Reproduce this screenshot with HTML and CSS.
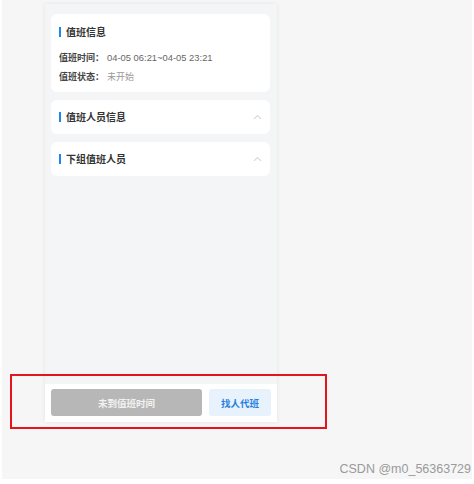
FILE: index.html
```html
<!DOCTYPE html>
<html lang="zh-CN">
<head>
<meta charset="utf-8">
<link rel="stylesheet" href="styles.css">
</head>
<body>
<div class="page">
  <div class="phone">
    <div class="content">
      <section class="card info">
        <div class="card-title"><span class="bar"></span>值班信息</div>
        <div class="row"><span class="label">值班时间：</span><span class="value">04-05 06:21~04-05 23:21</span></div>
        <div class="row"><span class="label">值班状态：</span><span class="value muted">未开始</span></div>
      </section>
      <section class="card fold">
        <div class="card-title"><span class="bar"></span>值班人员信息</div>
        <svg class="chev" viewBox="0 0 10 6" width="9" height="6"><path d="M1 5 L5 1.5 L9 5" fill="none" stroke="#d2d4d8" stroke-width="1.2"/></svg>
      </section>
      <section class="card fold">
        <div class="card-title"><span class="bar"></span>下组值班人员</div>
        <svg class="chev" viewBox="0 0 10 6" width="9" height="6"><path d="M1 5 L5 1.5 L9 5" fill="none" stroke="#d2d4d8" stroke-width="1.2"/></svg>
      </section>
    </div>
    <div class="footer">
      <button class="btn disabled">未到值班时间</button>
      <button class="btn light">找人代班</button>
    </div>
  </div>
  <div class="highlight"></div>
  <div class="watermark">CSDN @m0_56363729</div>
</div>
</body>
</html>
```
FILE: styles.css
```css
* { box-sizing: border-box; }
html, body { margin: 0; padding: 0; background: #fff; }
body { font-family: "Noto Sans CJK SC", "Noto Sans", sans-serif; }
.page {
  position: relative;
  margin: 0 2px 0 2px;
  height: 479px;
  background: #f6f6f6;
  padding-top: 4px;
  padding-left: 43px;
}
.phone {
  width: 232px;
  height: 418px;
  background: #f4f5f7;
  box-shadow: 0 0 4px rgba(0,0,0,0.08);
  display: flex;
  flex-direction: column;
}
.content {
  padding: 10px 7px 0 6px;
  display: flex;
  flex-direction: column;
  gap: 8px;
}
.card {
  background: #fff;
  border-radius: 6px;
  padding: 0 8px;
}
.info { height: 78px; padding-top: 10px; }
.fold {
  height: 34px;
  display: flex;
  align-items: center;
  justify-content: space-between;
}
.card-title {
  display: flex;
  align-items: center;
  font-size: 10px;
  font-weight: 700;
  color: #333;
  line-height: 16px;
}
.bar {
  width: 2px;
  height: 10px;
  background: #1f86ef;
  margin-right: 5px;
}
.info .card-title { margin-bottom: 11px; }
.row {
  font-size: 9px;
  line-height: 13px;
  margin-bottom: 6px;
  display: flex;
  align-items: baseline;
}
.label { font-weight: 700; color: #444; margin-right: 3px; }
.value {
  color: #666;
  font-family: "Liberation Sans", "Noto Sans CJK SC", sans-serif;
  font-size: 9.4px;
}
.muted { color: #999; font-family: "Noto Sans CJK SC", sans-serif; font-size: 9px; }
.footer {
  margin-top: auto;
  background: #fff;
  height: 38px;
  padding: 5px 6px 0 6px;
  display: flex;
  gap: 7px;
}
.btn {
  height: 27px;
  border: none;
  border-radius: 3px;
  font-family: "Noto Sans CJK SC", sans-serif;
  font-size: 9.5px;
  font-weight: 700;
  padding: 0;
}
.disabled { width: 151px; background: #b7b7b7; color: #f2f2f2; }
.light { width: 62px; background: #e7f2fd; color: #1d7ee2; }
.highlight {
  position: absolute;
  left: 8px;
  top: 374px;
  width: 317px;
  height: 55px;
  border: 2px solid #e3141c;
}
.watermark {
  position: absolute;
  right: 1px;
  top: 462px;
  font-family: "Liberation Sans", Arial, sans-serif;
  font-size: 12.5px;
  color: #9a9a9a;
}
```
